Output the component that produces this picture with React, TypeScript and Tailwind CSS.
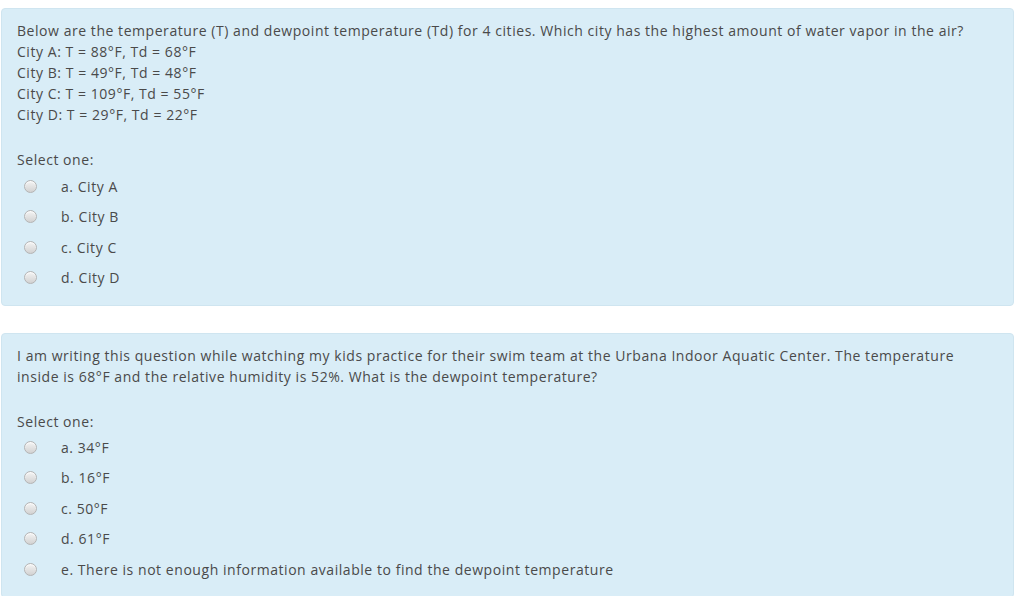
import React from 'react';

type Question = {
    text: React.ReactNode;
    options: string[];
    optionsOffset: string;
};

const questions: Question[] = [
    {
        text: (
            <>
                <p>Below are the temperature (T) and dewpoint temperature (Td) for 4 cities. Which city has the highest amount of water vapor in the air?</p>
                <p>City A: T = 88°F, Td = 68°F</p>
                <p>City B: T = 49°F, Td = 48°F</p>
                <p>City C: T = 109°F, Td = 55°F</p>
                <p>City D: T = 29°F, Td = 22°F</p>
            </>
        ),
        options: ['a. City A', 'b. City B', 'c. City C', 'd. City D'],
        optionsOffset: 'mt-[1px]',
    },
    {
        text: (
            <p>
                I am writing this question while watching my kids practice for their swim team at the Urbana Indoor Aquatic Center. The temperature
                <br />
                inside is 68°F and the relative humidity is 52%. What is the dewpoint temperature?
            </p>
        ),
        options: [
            'a. 34°F',
            'b. 16°F',
            'c. 50°F',
            'd. 61°F',
            'e. There is not enough information available to find the dewpoint temperature',
        ],
        optionsOffset: 'mt-0',
    },
];

const Radio: React.FC = () => (
    <span className="block w-[13px] h-[13px] rounded-full border border-[#b4b4b4] bg-gradient-to-b from-[#f4f4f4] to-[#d2d2d2] shadow-[inset_0_1px_1px_rgba(255,255,255,0.8)]" />
);

const QuestionCard: React.FC<{ q: Question }> = ({ q }) => (
    <div className="bg-[#d9edf7] border border-[#cfe5f0] rounded-[4px] pt-[11px] pb-[12px] pl-[15px] pr-[15px]">
        <div className="leading-[21px]">{q.text}</div>
        <div className="mt-[24px] leading-[21px]">Select one:</div>
        <div className={`flex flex-col ${q.optionsOffset}`}>
            {q.options.map(opt => (
                <label key={opt} className="flex items-center h-[30.5px]">
                    <span className="w-[44px] pl-[7px] flex items-center">
                        <Radio />
                    </span>
                    <span className="leading-[21px]">{opt}</span>
                </label>
            ))}
        </div>
    </div>
);

export default function App() {
    return (
        <div
            className="w-[1024px] h-[596px] overflow-hidden bg-white text-[14px] tracking-[0.55px] text-[#4a4a4a] pt-[8px] pl-[1px] pr-[10px]"
            style={{ fontFamily: '"Open Sans", "Noto Sans", sans-serif' }}
        >
            <div className="flex flex-col gap-[27px]">
                {questions.map((q, i) => (
                    <QuestionCard key={i} q={q} />
                ))}
            </div>
        </div>
    );
}
